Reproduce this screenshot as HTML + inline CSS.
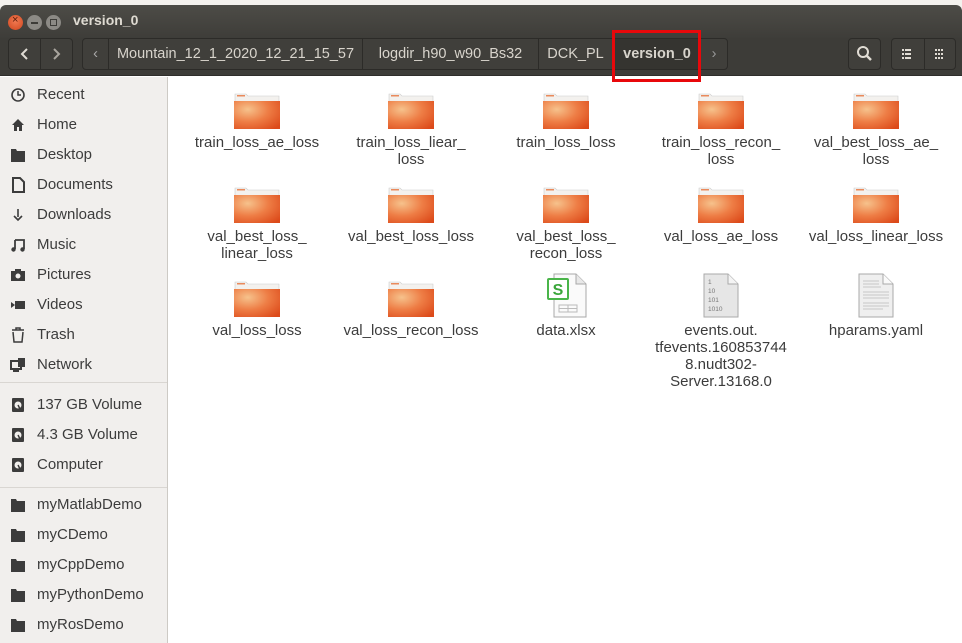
<!DOCTYPE html>
<html><head><meta charset="utf-8"><style>
*{margin:0;padding:0;box-sizing:border-box}
body{width:962px;height:643px;overflow:hidden;background:#fff;font-family:"Liberation Sans",sans-serif;position:relative}
.bgtop{position:absolute;left:0;top:0;width:962px;height:8px;background:#f4f2ee}
.title{position:absolute;left:0;top:5px;width:962px;height:33px;background:linear-gradient(#4d4c47,#3e3d39);border-radius:6px 6px 0 0}
.title .t{position:absolute;left:73px;top:7px;color:#dfdbd2;font-weight:bold;font-size:14px}
.btn{position:absolute;top:10px;width:15px;height:15px;border-radius:50%}
.tool{position:absolute;left:0;top:38px;width:962px;height:38px;background:#3d3c38;border-bottom:1px solid #2f2e2b}
.box{position:absolute;top:0;height:32px;border:1px solid #2c2b28;border-radius:4px;background:#403f3b}
.crumb{position:absolute;top:1px;height:30px;line-height:30px;color:#d8d4cc;font-size:14.5px;text-align:center;border-right:1px solid #2c2b28}
.side{position:absolute;left:0;top:77px;width:168px;height:566px;background:#f1efed;border-right:1px solid #cdcac5}
.si{position:absolute;left:10px;height:20px;font-size:15px;color:#3c3c3c;line-height:20px}
.si .ic{position:absolute;left:0;top:2px;width:16px;height:16px}
.si span{position:absolute;left:27px;white-space:nowrap}
.sep{position:absolute;left:0;width:167px;height:1px;background:#d9d6d2}
.it{position:absolute;width:150px;text-align:center;font-size:15px;color:#3c3c3c;line-height:17px}
.it svg{display:block;margin:0 auto 4px}
</style></head><body>
<div class="bgtop"></div>
<div class="title">
<div class="btn" style="left:8px;background:radial-gradient(circle at 50% 40%,#f07a52,#d0461e)"><span style="position:absolute;left:4px;top:-1px;font-size:11px;color:#5a1c0a">×</span></div>
<div class="btn" style="left:27px;background:#8c8a85"><span style="position:absolute;left:4px;top:7px;width:7px;height:1.5px;background:#3d3c38"></span></div>
<div class="btn" style="left:46px;background:#8c8a85"><span style="position:absolute;left:4px;top:4px;width:7px;height:7px;border:1.5px solid #3d3c38"></span></div>
<div class="t">version_0</div>
</div>
<div class="tool">
<div class="box" style="left:8px;width:65px"></div>
<div style="position:absolute;left:8px;top:0;width:65px;height:32px;">
<div style="position:absolute;left:32px;top:0;width:1px;height:32px;background:#2c2b28"></div>
<svg width="65" height="32" style="position:absolute;left:0;top:0"><path d="M19 11l-5 5 5 5" stroke="#e0dcd4" stroke-width="2" fill="none"/><path d="M46 11l5 5-5 5" stroke="#a9a59e" stroke-width="2" fill="none"/></svg></div>
<div class="box" style="left:82px;width:646px"></div>
<div class="crumb" style="left:83px;width:26px;color:#aaa">‹</div>
<div class="crumb" style="left:109px;width:254px">Mountain_12_1_2020_12_21_15_57</div>
<div class="crumb" style="left:363px;width:176px">logdir_h90_w90_Bs32</div>
<div class="crumb" style="left:539px;width:74px">DCK_PL</div>
<div class="crumb" style="left:613px;width:88px;font-weight:bold;background:#353430;border-right:none">version_0</div>
<div class="crumb" style="left:701px;width:26px;color:#999;border:none">›</div>
<div style="position:absolute;left:612px;top:-8px;width:89px;height:52px;border:3px solid #e8080b"></div>
<div class="box" style="left:848px;width:33px"><svg width="31" height="30"><circle cx="14" cy="13" r="5" stroke="#e0dcd4" stroke-width="2" fill="none"/><path d="M18 17l4 4" stroke="#e0dcd4" stroke-width="2.5"/></svg></div>
<div class="box" style="left:891px;width:65px"><div style="position:absolute;left:32px;top:0;width:1px;height:30px;background:#2c2b28"></div>
<svg width="63" height="30"><g fill="#e0dcd4"><rect x="10" y="10" width="2" height="2"/><rect x="13" y="10" width="6" height="2"/><rect x="10" y="14" width="2" height="2"/><rect x="13" y="14" width="6" height="2"/><rect x="10" y="18" width="2" height="2"/><rect x="13" y="18" width="6" height="2"/>
<rect x="43" y="10" width="2" height="2"/><rect x="46" y="10" width="2" height="2"/><rect x="49" y="10" width="2" height="2"/><rect x="43" y="14" width="2" height="2"/><rect x="46" y="14" width="2" height="2"/><rect x="49" y="14" width="2" height="2"/><rect x="43" y="18" width="2" height="2"/><rect x="46" y="18" width="2" height="2"/><rect x="49" y="18" width="2" height="2"/></g></svg></div>
</div>
<div class="side">
<div class="si" style="top:8px"><svg class="ic"><circle cx="8" cy="8" r="6" stroke="#3c3c3c" stroke-width="1.6" fill="none"/><path d="M8 4v4h3" stroke="#3c3c3c" stroke-width="1.5" fill="none"/></svg><span>Recent</span></div>
<div class="si" style="top:38px"><svg class="ic"><path d="M2 8L8 2l6 6h-2v6H4V8z" fill="#3c3c3c"/><rect x="7" y="10" width="2" height="4" fill="#f1efed"/></svg><span>Home</span></div>
<div class="si" style="top:68px"><svg class="ic"><path d="M1 2h5l1 2h8v11H1z" fill="#3c3c3c"/></svg><span>Desktop</span></div>
<div class="si" style="top:98px"><svg class="ic"><path d="M3 1h7l4 4v10H3z" stroke="#3c3c3c" stroke-width="2" fill="none"/></svg><span>Documents</span></div>
<div class="si" style="top:128px"><svg class="ic"><path d="M8 2v8M4 9l4 4 4-4" stroke="#3c3c3c" stroke-width="1.6" fill="none"/></svg><span>Downloads</span></div>
<div class="si" style="top:158px"><svg class="ic"><path d="M5 3h9v9M5 3v9" stroke="#3c3c3c" stroke-width="1.8" fill="none"/><circle cx="3.5" cy="12.5" r="2.2" fill="#3c3c3c"/><circle cx="12.5" cy="12.5" r="2.2" fill="#3c3c3c"/></svg><span>Music</span></div>
<div class="si" style="top:188px"><svg class="ic"><rect x="1" y="4" width="14" height="10" fill="#3c3c3c"/><rect x="5" y="2" width="6" height="3" fill="#3c3c3c"/><circle cx="8" cy="9" r="2.5" fill="#f1efed"/></svg><span>Pictures</span></div>
<div class="si" style="top:218px"><svg class="ic"><rect x="5" y="4" width="10" height="8" fill="#3c3c3c"/><path d="M1 5l4 3-4 3z" fill="#3c3c3c"/></svg><span>Videos</span></div>
<div class="si" style="top:248px"><svg class="ic"><path d="M2 3h12M6 3V1h4v2M3 5l1 10h8l1-10" stroke="#3c3c3c" stroke-width="1.5" fill="none"/></svg><span>Trash</span></div>
<div class="si" style="top:278px"><svg class="ic"><rect x="1" y="4" width="10" height="8" stroke="#3c3c3c" stroke-width="2" fill="none"/><rect x="8" y="1" width="7" height="9" fill="#3c3c3c"/><rect x="3" y="13" width="6" height="2" fill="#3c3c3c"/></svg><span>Network</span></div>
<div class="sep" style="top:305px"></div>
<div class="si" style="top:318px"><svg class="ic"><rect x="2" y="1" width="12" height="14" rx="1" fill="#3c3c3c"/><circle cx="8" cy="8" r="3.5" fill="#f1efed"/><path d="M8 8l2 4" stroke="#3c3c3c" stroke-width="1.5"/></svg><span>137 GB Volume</span></div>
<div class="si" style="top:348px"><svg class="ic"><rect x="2" y="1" width="12" height="14" rx="1" fill="#3c3c3c"/><circle cx="8" cy="8" r="3.5" fill="#f1efed"/><path d="M8 8l2 4" stroke="#3c3c3c" stroke-width="1.5"/></svg><span>4.3 GB Volume</span></div>
<div class="si" style="top:378px"><svg class="ic"><rect x="2" y="1" width="12" height="14" rx="1" fill="#3c3c3c"/><circle cx="8" cy="8" r="3.5" fill="#f1efed"/><path d="M8 8l2 4" stroke="#3c3c3c" stroke-width="1.5"/></svg><span>Computer</span></div>
<div class="sep" style="top:410px"></div>
<div class="si" style="top:418px"><svg class="ic"><path d="M1 2h5l1 2h8v11H1z" fill="#3c3c3c"/></svg><span>myMatlabDemo</span></div>
<div class="si" style="top:448px"><svg class="ic"><path d="M1 2h5l1 2h8v11H1z" fill="#3c3c3c"/></svg><span>myCDemo</span></div>
<div class="si" style="top:478px"><svg class="ic"><path d="M1 2h5l1 2h8v11H1z" fill="#3c3c3c"/></svg><span>myCppDemo</span></div>
<div class="si" style="top:508px"><svg class="ic"><path d="M1 2h5l1 2h8v11H1z" fill="#3c3c3c"/></svg><span>myPythonDemo</span></div>
<div class="si" style="top:538px"><svg class="ic"><path d="M1 2h5l1 2h8v11H1z" fill="#3c3c3c"/></svg><span>myRosDemo</span></div>
</div>

<svg width="0" height="0" style="position:absolute"><defs>
<radialGradient id="fg" cx="0.3" cy="0.3" r="0.9"><stop offset="0" stop-color="#f6c28c"/><stop offset="0.5" stop-color="#ee7d45"/><stop offset="1" stop-color="#dc4a1a"/></radialGradient>
<g id="fold"><path d="M1 2h11l2 2h31v10H1z" fill="#f3f1ee" stroke="#ccc" stroke-width="0.6"/><rect x="3" y="3" width="8" height="1.5" fill="#ea8a5c"/><rect x="0" y="9" width="46" height="28" fill="url(#fg)"/></g>
</defs></svg>

<div class="it" style="left:182px;top:92px"><svg width="46" height="38"><use href="#fold"/></svg>train_loss_ae_loss</div>
<div class="it" style="left:336px;top:92px"><svg width="46" height="38"><use href="#fold"/></svg>train_loss_liear_<br>loss</div>
<div class="it" style="left:491px;top:92px"><svg width="46" height="38"><use href="#fold"/></svg>train_loss_loss</div>
<div class="it" style="left:646px;top:92px"><svg width="46" height="38"><use href="#fold"/></svg>train_loss_recon_<br>loss</div>
<div class="it" style="left:801px;top:92px"><svg width="46" height="38"><use href="#fold"/></svg>val_best_loss_ae_<br>loss</div>

<div class="it" style="left:182px;top:186px"><svg width="46" height="38"><use href="#fold"/></svg>val_best_loss_<br>linear_loss</div>
<div class="it" style="left:336px;top:186px"><svg width="46" height="38"><use href="#fold"/></svg>val_best_loss_loss</div>
<div class="it" style="left:491px;top:186px"><svg width="46" height="38"><use href="#fold"/></svg>val_best_loss_<br>recon_loss</div>
<div class="it" style="left:646px;top:186px"><svg width="46" height="38"><use href="#fold"/></svg>val_loss_ae_loss</div>
<div class="it" style="left:801px;top:186px"><svg width="46" height="38"><use href="#fold"/></svg>val_loss_linear_loss</div>

<div class="it" style="left:182px;top:280px"><svg width="46" height="38"><use href="#fold"/></svg>val_loss_loss</div>
<div class="it" style="left:336px;top:280px"><svg width="46" height="38"><use href="#fold"/></svg>val_loss_recon_loss</div>
<div class="it" style="left:491px;top:273px"><svg width="46" height="45"><path d="M11 1h22l10 10v33H11z" fill="#fafafa" stroke="#a8a8a8"/><path d="M33 1v10h10" fill="#e8e8e8" stroke="#a8a8a8"/><rect x="5" y="6" width="20" height="20" rx="1" fill="#fff" stroke="#4ab54a" stroke-width="2"/><text x="15" y="22" font-size="16" font-weight="bold" fill="#3aa63a" text-anchor="middle" font-family="Liberation Sans">S</text><path d="M16 32h18v7H16zM16 35.5h18M25 32v7" stroke="#bbb" fill="none"/></svg>data.xlsx</div>
<div class="it" style="left:646px;top:273px"><svg width="46" height="45"><path d="M6 1h24l10 10v33H6z" fill="#e6e6e6" stroke="#aaa"/><path d="M30 1v10h10" fill="#f4f4f4" stroke="#aaa"/><g font-size="6.5" fill="#777" font-family="Liberation Sans"><text x="10" y="11">1</text><text x="10" y="20">10</text><text x="10" y="29">101</text><text x="10" y="38">1010</text></g></svg>events.out.<br>tfevents.160853744<br>8.nudt302-<br>Server.13168.0</div>
<div class="it" style="left:801px;top:273px"><svg width="46" height="45"><path d="M6 1h24l10 10v33H6z" fill="#efefef" stroke="#aaa"/><path d="M30 1v10h10" fill="#fafafa" stroke="#aaa"/><g stroke="#bbb" stroke-width="0.8"><path d="M10 8h16M10 11h16M10 14h18M10 19h26M10 22h26M10 25h26M10 30h26M10 33h26M10 36h20"/></g></svg>hparams.yaml</div>
</body></html>
